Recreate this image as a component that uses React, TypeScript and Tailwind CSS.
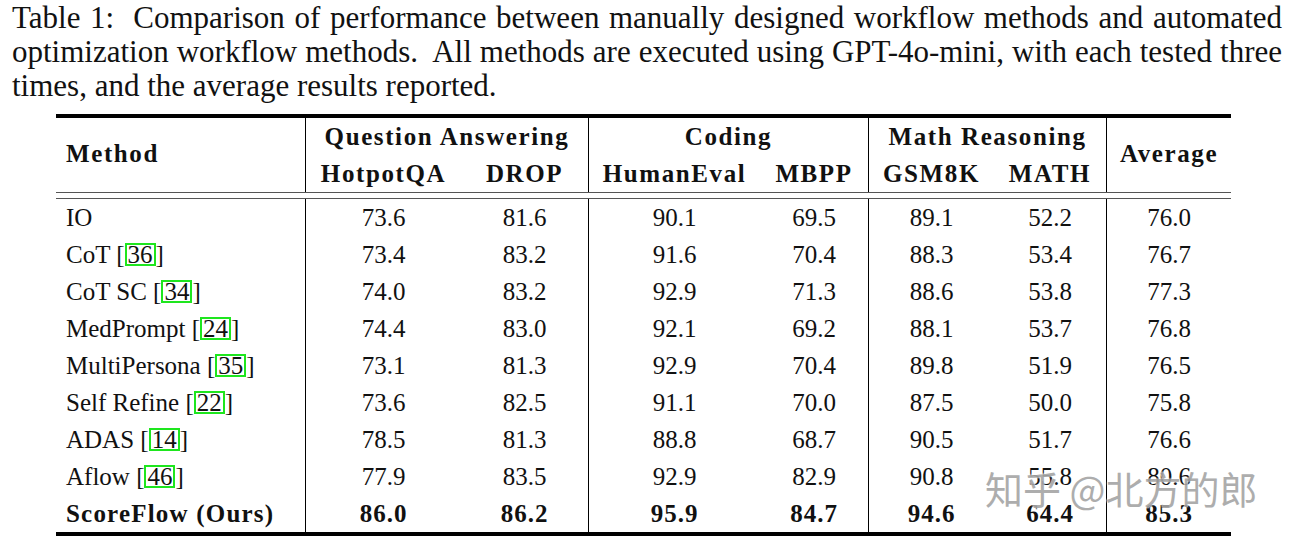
import React from "react";

const serif = { fontFamily: '"Liberation Serif", "Times New Roman", serif' };

type Row = { name: string; cite?: string; vals: string[]; bold?: boolean };

const rows: Row[] = [
  { name: "IO", vals: ["73.6", "81.6", "90.1", "69.5", "89.1", "52.2", "76.0"] },
  { name: "CoT", cite: "36", vals: ["73.4", "83.2", "91.6", "70.4", "88.3", "53.4", "76.7"] },
  { name: "CoT SC", cite: "34", vals: ["74.0", "83.2", "92.9", "71.3", "88.6", "53.8", "77.3"] },
  { name: "MedPrompt", cite: "24", vals: ["74.4", "83.0", "92.1", "69.2", "88.1", "53.7", "76.8"] },
  { name: "MultiPersona", cite: "35", vals: ["73.1", "81.3", "92.9", "70.4", "89.8", "51.9", "76.5"] },
  { name: "Self Refine", cite: "22", vals: ["73.6", "82.5", "91.1", "70.0", "87.5", "50.0", "75.8"] },
  { name: "ADAS", cite: "14", vals: ["78.5", "81.3", "88.8", "68.7", "90.5", "51.7", "76.6"] },
  { name: "Aflow", cite: "46", vals: ["77.9", "83.5", "92.9", "82.9", "90.8", "55.8", "80.6"] },
  { name: "ScoreFlow (Ours)", bold: true, vals: ["86.0", "86.2", "95.9", "84.7", "94.6", "64.4", "85.3"] },
];

const cols = "grid grid-cols-[249px_156px_127px_172px_108px_126px_112px_125px]";
const groupStart = [false, true, false, true, false, true, false, true];

function Cite({ n }: { n: string }) {
  return (
    <span>
      [
      <span className="inline-block border-2 border-[#1ee61e] leading-[19px] px-[1px]">{n}</span>
      ]
    </span>
  );
}

export default function App() {
  return (
    <div className="w-[1294px] h-[542px] bg-white text-[#111] overflow-hidden relative" style={serif}>
      <div className="pl-[12px] pr-[12px] pt-[1px] text-[31px] leading-[34px]">
        <div className="whitespace-nowrap text-justify [text-align-last:justify]">
          Table 1:&nbsp; Comparison of performance between manually designed workflow methods and automated
        </div>
        <div className="whitespace-nowrap text-justify [text-align-last:justify]">
          optimization workflow methods.&nbsp; All methods are executed using GPT-4o-mini, with each tested three
        </div>
        <div>times, and the average results reported.</div>
      </div>

      <div className="ml-[56px] mt-[11px] w-[1175px] text-[25px]">
        <div className="h-[4px] bg-black" />
        {/* header */}
        <div className={`${cols} grid-rows-[37px_37px] font-bold tracking-[1.6px]`} style={serif}>
          <div className="row-span-2 flex items-center pl-[10px] pb-[2px]">Method</div>
          <div className="col-span-2 border-l border-black flex items-center justify-center leading-[37px]">Question Answering</div>
          <div className="col-span-2 border-l border-black flex items-center justify-center leading-[37px]">Coding</div>
          <div className="col-span-2 border-l border-black flex items-center justify-center leading-[37px]">Math Reasoning</div>
          <div className="row-span-2 border-l border-black flex items-center justify-center pb-[2px]">Average</div>
          <div className="border-l border-black flex items-center justify-center leading-[37px]">HotpotQA</div>
          <div className="flex items-center justify-center leading-[37px]">DROP</div>
          <div className="border-l border-black flex items-center justify-center leading-[37px]">HumanEval</div>
          <div className="flex items-center justify-center leading-[37px]">MBPP</div>
          <div className="border-l border-black flex items-center justify-center leading-[37px]">GSM8K</div>
          <div className="flex items-center justify-center leading-[37px]">MATH</div>
        </div>
        <div className="h-px bg-[#555]" />
        <div className="h-[5px]" />
        <div className="h-px bg-[#555]" />
        {/* body */}
        {rows.map((r) => (
          <div key={r.name} className={`${cols} h-[37px] leading-[37px] ${r.bold ? "font-bold" : ""}`}>
            <div className={`pl-[10px] whitespace-nowrap ${r.bold ? "tracking-[1.2px]" : ""}`}>
              {r.name}
              {r.cite ? (
                <>
                  {" "}
                  <Cite n={r.cite} />
                </>
              ) : null}
            </div>
            {r.vals.map((v, i) => (
              <div
                key={i}
                className={`text-center ${groupStart[i + 1] ? "border-l border-black" : ""} ${r.bold ? "tracking-[1px]" : ""}`}
              >
                {v}
              </div>
            ))}
          </div>
        ))}
        <div className="h-[4px] bg-black" />
      </div>

      <div
        className="absolute left-[985px] top-[465px] text-[38px] leading-[46px] text-[#a5a5a5] opacity-90 whitespace-nowrap [text-shadow:0_0_2px_#fff,0_0_2px_#fff]"
        style={{ fontFamily: '"Noto Sans CJK SC", "Noto Sans", sans-serif' }}
      >
        知乎 @北方的郎
      </div>
    </div>
  );
}
